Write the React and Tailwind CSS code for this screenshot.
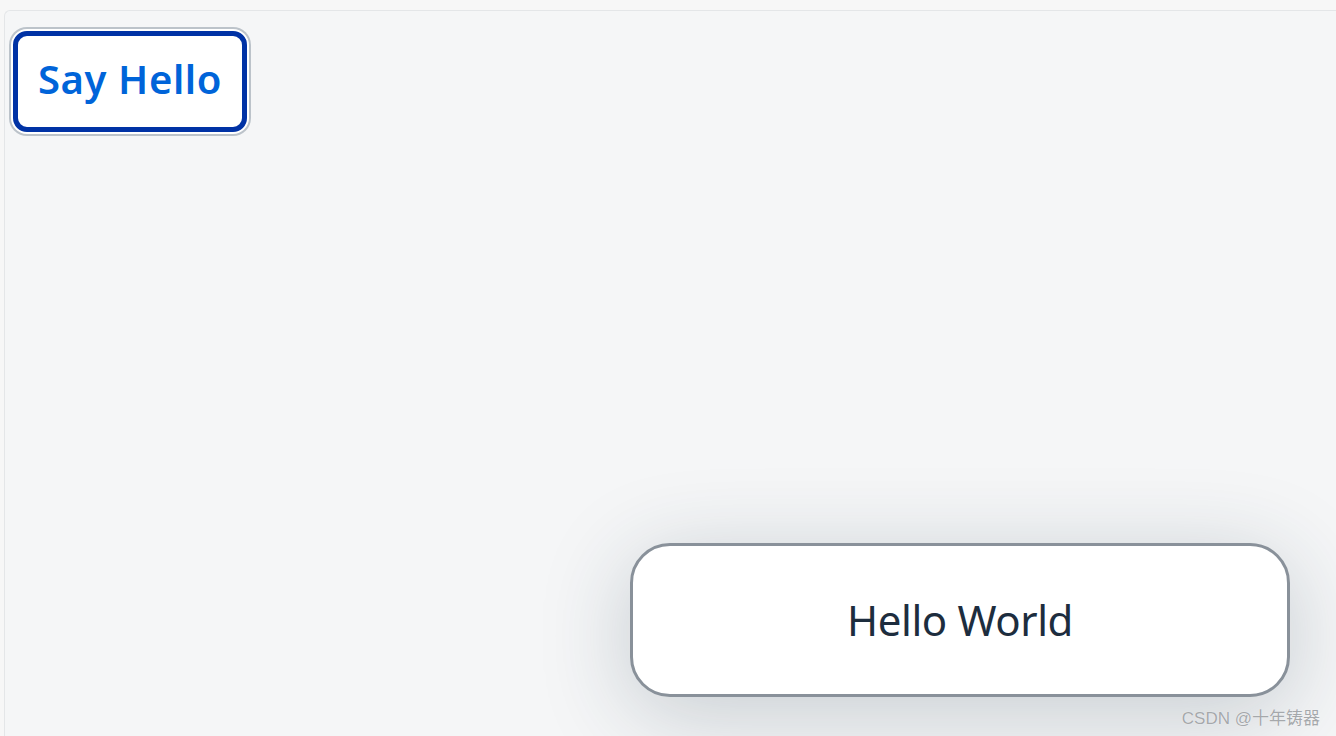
export default function App() {
  return (
    <div className="relative w-[1336px] h-[736px] overflow-hidden bg-[#f7f7f7] pt-[10px] pl-[4px] flex" style={{ fontFamily: '"Noto Sans", "Open Sans", sans-serif' }}>
      <div className="flex-1 bg-[#f5f6f7] border-l border-t border-[#e4e6e8] rounded-tl-[6px] pl-[8px] pt-[20px]">
        <button className="w-[234px] h-[101px] bg-white border-[5px] border-[#0032a5] rounded-[14px] shadow-[0_0_0_2px_#ffffff,0_0_0_4px_#bcc3ca] text-[#0064d9] text-[40px] font-semibold leading-none flex items-center justify-center pb-[6px] tracking-[0.6px]">
          Say Hello
        </button>
      </div>
      <div className="absolute right-[46px] bottom-[39px] w-[660px] h-[154px] bg-white border-[3px] border-[#89919a] rounded-[40px] shadow-[0_16px_90px_rgba(34,53,72,0.22)] flex items-center justify-center">
        <span className="text-[#1d2d3e] text-[42px] leading-none tracking-[-0.4px]">Hello World</span>
      </div>
      <div className="absolute right-[16px] bottom-[9px] text-[17px] leading-none text-[#a5a8ab] [text-shadow:0_0_1px_#ffffff]" style={{ fontFamily: '"Liberation Sans", "Noto Sans CJK SC", sans-serif' }}>
        CSDN @十年铸器
      </div>
    </div>
  );
}
